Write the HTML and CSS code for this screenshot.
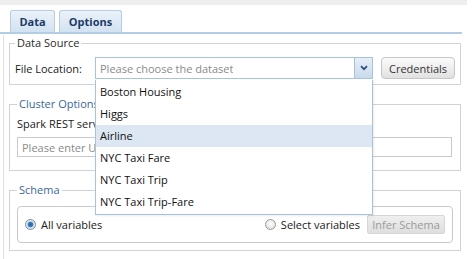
FILE: index.html
```html
<!DOCTYPE html>
<html>
<head>
<meta charset="utf-8">
<link rel="stylesheet" href="styles.css">
</head>
<body>
<div class="topbar"></div>
<div class="tabs">
  <div class="tab active">Data</div>
  <div class="tab">Options</div>
</div>
<div class="content">
  <fieldset class="group group-source">
    <legend class="legend legend-dark">Data Source</legend>
    <div class="row">
      <span class="label">File Location:</span>
      <div class="select">
        <span class="placeholder">Please choose the dataset</span>
        <span class="arrow">
          <svg width="8" height="6" viewBox="0 0 8 6"><path d="M1 1.2 L4 4.2 L7 1.2" fill="none" stroke="#2c4f7c" stroke-width="1.7"/></svg>
        </span>
      </div>
      <button class="btn">Credentials</button>
    </div>
  </fieldset>

  <fieldset class="group group-cluster">
    <legend class="legend">Cluster Options</legend>
    <div class="field-label">Spark REST server URL:</div>
    <div class="input"><span class="placeholder">Please enter URL of the Spark REST server</span></div>
  </fieldset>

  <fieldset class="group group-schema">
    <legend class="legend">Schema</legend>
    <div class="schema-box">
      <label class="radio-item"><span class="radio checked"></span>All variables</label>
      <div class="schema-right">
        <label class="radio-item"><span class="radio"></span>Select variables</label>
        <button class="btn btn-disabled" disabled>Infer Schema</button>
      </div>
    </div>
  </fieldset>

  <ul class="dropdown">
    <li class="option">Boston Housing</li>
    <li class="option">Higgs</li>
    <li class="option hover">Airline</li>
    <li class="option">NYC Taxi Fare</li>
    <li class="option">NYC Taxi Trip</li>
    <li class="option">NYC Taxi Trip-Fare</li>
  </ul>
</div>
</body>
</html>
```

FILE: styles.css
```css
* { box-sizing: border-box; }
html, body { margin: 0; padding: 0; background: #fff; }
body {
  width: 474px;
  height: 259px;
  overflow: hidden;
  font-family: "Open Sans", "DejaVu Sans", sans-serif;
  font-size: 11px;
  color: #1a1a1a;
}

.topbar {
  width: 467px;
  height: 5px;
  background: #eeeeee;
}

.tabs {
  display: flex;
  gap: 4px;
  width: 462px;
  margin-top: 5px;
  padding-left: 10px;
  border-bottom: 2px solid #b3cde6;
}
.tab {
  height: 22px;
  line-height: 21px;
  padding: 0;
  border: 1px solid #b7cde3;
  border-bottom: none;
  border-radius: 3px 3px 0 0;
  background: linear-gradient(#eaf2fa, #d3e2f1);
  color: #1d3b66;
  font-weight: 700;
  font-size: 11px;
  text-align: center;
}
.tab.active { width: 45px; }
.tab + .tab { width: 63px; }

.content {
  position: relative;
  margin-left: 3px;
  border-left: 1px solid #e0e0e0;
  height: 225px;
}

.group {
  width: 452px;
  margin: 0 0 0 5px;
  padding: 0 5px;
  border: 1px solid #d2d2d2;
  min-width: 0;
}
.legend {
  padding: 0 2px;
  line-height: 16px;
  font-size: 11px;
  color: #3a679c;
}
.legend-dark { color: #2a2a2a; }
.group-source { margin-top: 1px; padding-bottom: 5px; }
.group-cluster { margin-top: 11px; padding: 0 7px 13px; }
.group-schema { margin-top: 11px; padding: 0 7px 7px; }

.row {
  display: flex;
  align-items: center;
  margin-top: 6px;
  height: 22px;
}
.label { width: 80px; }

.select {
  position: relative;
  width: 278px;
  height: 22px;
  border: 1px solid #a9c2dc;
  background: #fff;
  display: flex;
  align-items: center;
  padding-left: 4px;
}
.placeholder { color: #8a8a8a; white-space: nowrap; overflow: hidden; }
.arrow {
  position: absolute;
  right: 0;
  top: 0;
  width: 18px;
  height: 20px;
  border-left: 1px solid #a9c2dc;
  background: linear-gradient(#e6eef8, #c9daed);
  display: flex;
  align-items: center;
  justify-content: center;
}

.btn {
  font-family: inherit;
  font-size: 11px;
  height: 22px;
  margin-left: 8px;
  width: 74px;
  padding: 0;
  border: 1px solid #c6c6c6;
  border-radius: 4px;
  background: linear-gradient(#fbfbfb, #e1e1e1);
  color: #333;
}

.field-label {
  margin-top: 4px;
  line-height: 16px;
  white-space: nowrap;
}
.input {
  margin-top: 5px;
  width: 435px;
  height: 20px;
  border: 1px solid #c9c9c9;
  padding-left: 4px;
  display: flex;
  align-items: center;
}

.schema-box {
  margin-top: 8px;
  width: 436px;
  height: 37px;
  border: 1px solid #c9c9c9;
  border-radius: 4px;
  display: flex;
  align-items: center;
  justify-content: space-between;
  padding: 0 7px 0 7px;
}
.schema-right { display: flex; align-items: center; }
.radio-item { display: flex; align-items: center; gap: 5px; }
.radio {
  width: 11px;
  height: 11px;
  border-radius: 50%;
  border: 1px solid #9a9a9a;
  background: radial-gradient(circle at 50% 40%, #ffffff, #d8d8d8);
}
.radio.checked {
  background: radial-gradient(circle, #1f5fa0 0, #3d86c9 2.5px, #cfdbe6 3.2px, #eef2f5 5px);
  border-color: #7f8d9a;
}
.btn-disabled {
  width: 78px;
  height: 19px;
  margin-left: 7px;
  color: #9b9b9b;
  border-color: #d6d6d6;
  background: linear-gradient(#efefef, #dedede);
  border-radius: 2px;
}

.dropdown {
  position: absolute;
  top: 45px;
  left: 91px;
  width: 278px;
  margin: 0;
  padding: 1px 0;
  list-style: none;
  background: #fff;
  border: 1px solid #a9c2dc;
  border-top: none;
  box-shadow: 1px 1px 2px rgba(0,0,0,0.08);
}
.option {
  height: 22px;
  line-height: 22px;
  padding-left: 4px;
  color: #111;
}
.option.hover { background: #dde7f3; }
```
